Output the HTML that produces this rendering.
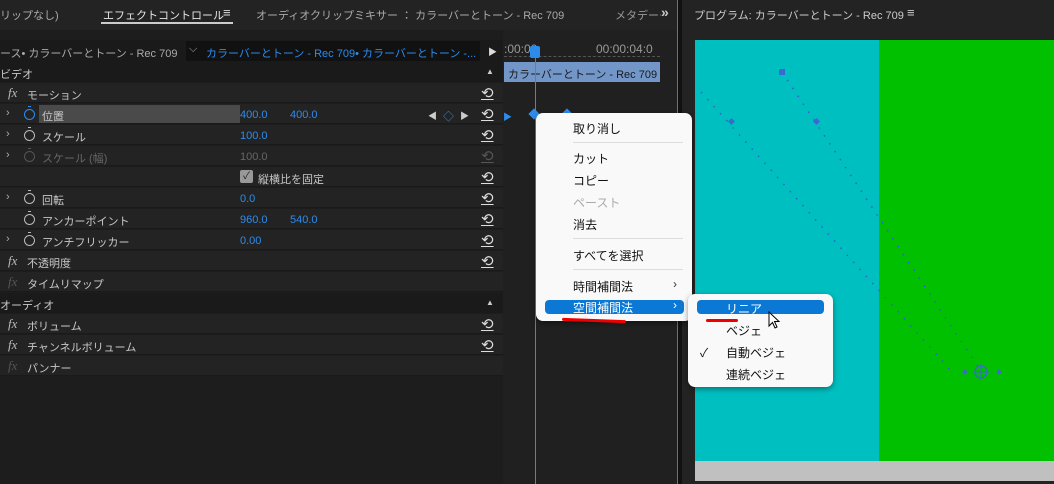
<!DOCTYPE html>
<html><head><meta charset="utf-8"><style>
*{margin:0;padding:0;box-sizing:border-box}
body{width:1054px;height:484px;background:#1d1d1d;position:relative;overflow:hidden;font-family:"Liberation Sans","Noto Sans CJK JP",sans-serif;font-size:11px;color:#bdbdbd}
.a{position:absolute;white-space:nowrap}
.row{position:absolute;left:0;width:503px;height:20px;background:#232323;border-bottom:1px solid #1a1a1a}
.lbl{position:absolute;top:4px;font-size:11px;color:#c8c8c8}
.fx{position:absolute;left:8px;top:2px;font-style:italic;font-family:"Liberation Serif",serif;font-size:13px;color:#bbb}
.val{position:absolute;top:5px;color:#2d8ceb;font-size:11px}
.rs{position:absolute;left:481px;top:1px;font-size:15px;color:#ddd;text-decoration:underline;text-decoration-thickness:1px}
.sw{position:absolute;left:24px;top:5px;width:11px;height:11px;border:1.5px solid #bbb;border-radius:50%}
.sw:before{content:"";position:absolute;left:3px;top:-4px;width:3px;height:2px;background:inherit;border-top:1.5px solid;border-color:inherit}
.car{position:absolute;left:6px;top:3px;color:#aaa;font-size:11px}
.mi{position:absolute;left:573px;font-size:12px;color:#111}
.sep{position:absolute;left:573px;width:110px;height:1px;background:#ddd}
</style></head><body>
<div class="a" style="left:0;top:0;width:677px;height:30px;background:#232323"></div>
<div class="a" style="left:0;top:7px;font-size:11px;color:#aaa">リップなし)</div>
<div class="a" style="left:103px;top:7px;font-size:11px;color:#e6e6e6">エフェクトコントロール</div>
<div class="a" style="left:223px;top:5px;font-size:13px;color:#ddd">≡</div>
<div class="a" style="left:101px;top:22px;width:132px;height:2px;background:#ccc"></div>
<div class="a" style="left:256px;top:7px;font-size:11px;color:#aaa">オーディオクリップミキサー ： カラーバーとトーン - Rec 709</div>
<div class="a" style="left:615px;top:7px;font-size:11px;color:#999">メタデータ</div>
<div class="a" style="left:661px;top:4px;width:16px;height:20px;background:#232323;font-size:14px;color:#ccc;font-weight:bold">»</div>
<div class="a" style="left:677px;top:0;width:1px;height:484px;background:#2d7fd6"></div>
<div class="a" style="left:678px;top:0;width:4px;height:484px;background:#111"></div>
<div class="a" style="left:682px;top:0;width:372px;height:484px;background:#232323"></div>
<div class="a" style="left:694px;top:7px;font-size:11px;color:#ccc">プログラム: カラーバーとトーン - Rec 709</div>
<div class="a" style="left:907px;top:5px;font-size:13px;color:#ccc">≡</div>
<div class="a" style="left:695px;top:40px;width:184px;height:421px;background:#00bfc0"></div>
<div class="a" style="left:879px;top:40px;width:175px;height:421px;background:#00c000"></div>
<div class="a" style="left:695px;top:461px;width:359px;height:20px;background:#c0c0c0"></div>
<svg class="a" style="left:0;top:0" width="1054" height="484">
<g fill="none" stroke="#3a5ec8" stroke-width="1.5">
<g stroke-dasharray="1.5 8"><line x1="701" y1="92" x2="952" y2="372"/><line x1="782" y1="72" x2="981" y2="371"/></g>
</g>
<g fill="#3a6ad0">
<rect x="779" y="69" width="6" height="6"/>
<rect x="729" y="119" width="5" height="5" transform="rotate(45 731.5 121.5)"/>
<rect x="814" y="119" width="5" height="5" transform="rotate(45 816.5 121.5)"/>
<rect x="963" y="370" width="4" height="4" transform="rotate(45 965 372)"/>
<rect x="997" y="370" width="4" height="4" transform="rotate(45 999 372)"/>
</g>
<circle cx="981" cy="372" r="6" fill="none" stroke="#3a6ad0" stroke-width="1.3"/>
<line x1="981" y1="364" x2="981" y2="380" stroke="#3a6ad0"/><line x1="973" y1="372" x2="989" y2="372" stroke="#3a6ad0"/>
</svg>
<div class="a" style="left:0;top:40px;width:503px;height:22px;background:#1a1a1a"></div>
<div class="a" style="left:0;top:45px;color:#aaa">ース• カラーバーとトーン - Rec 709</div>
<div class="a" style="left:186px;top:41px;width:294px;height:20px;background:#111"></div>
<div class="a" style="left:189px;top:43px;color:#aaa">⌵</div>
<div class="a" style="left:206px;top:45px;color:#2d8ceb">カラーバーとトーン - Rec 709• カラーバーとトーン -...</div>
<div class="a" style="left:488px;top:45px;color:#ddd;font-size:9px">▶</div>
<div class="row" style="top:62px;background:#1a1a1a"><span class="lbl" style="left:0">ビデオ</span><span class="a" style="left:486px;top:5px;font-size:8px;color:#ccc">▲</span></div>
<div class="row" style="top:83px"><span class="fx">fx</span><span class="lbl" style="left:27px">モーション</span><span class="rs">⟲</span></div>
<div class="row" style="top:104px"><span class="car">›</span><span class="sw" style="border-color:#2d8ceb"></span><div class="a" style="left:39px;top:1px;width:201px;height:18px;background:#4a4a4a"></div><span class="lbl" style="left:42px">位置</span><span class="val" style="left:240px">400.0</span><span class="val" style="left:290px">400.0</span><span class="a" style="left:428px;top:5px;font-size:9px;color:#ccc">◀</span><span class="a" style="left:443px;top:4px;color:#2d8ceb">◇</span><span class="a" style="left:460px;top:5px;font-size:9px;color:#ccc">▶</span><span class="rs">⟲</span></div>
<div class="row" style="top:125px"><span class="car">›</span><span class="sw"></span><span class="lbl" style="left:42px">スケール</span><span class="val" style="left:240px">100.0</span><span class="rs">⟲</span></div>
<div class="row" style="top:146px"><span class="car">›</span><span class="sw" style="border-color:#555"></span><span class="lbl" style="left:42px;color:#666">スケール (幅)</span><span class="val" style="left:240px;color:#666">100.0</span><span class="rs" style="color:#555">⟲</span></div>
<div class="row" style="top:167px"><div class="a" style="left:240px;top:3px;width:13px;height:13px;background:#999;border-radius:2px;color:#222;font-size:10px;text-align:center;line-height:13px">✓</div><span class="lbl" style="left:258px">縦横比を固定</span><span class="rs">⟲</span></div>
<div class="row" style="top:188px"><span class="car">›</span><span class="sw"></span><span class="lbl" style="left:42px">回転</span><span class="val" style="left:240px">0.0</span><span class="rs">⟲</span></div>
<div class="row" style="top:209px"><span class="sw"></span><span class="lbl" style="left:42px">アンカーポイント</span><span class="val" style="left:240px">960.0</span><span class="val" style="left:290px">540.0</span><span class="rs">⟲</span></div>
<div class="row" style="top:230px"><span class="car">›</span><span class="sw"></span><span class="lbl" style="left:42px">アンチフリッカー</span><span class="val" style="left:240px">0.00</span><span class="rs">⟲</span></div>
<div class="row" style="top:251px"><span class="fx">fx</span><span class="lbl" style="left:27px">不透明度</span><span class="rs">⟲</span></div>
<div class="row" style="top:272px"><span class="fx" style="color:#555">fx</span><span class="lbl" style="left:27px">タイムリマップ</span></div>
<div class="row" style="top:293px;background:#1a1a1a"><span class="lbl" style="left:0">オーディオ</span><span class="a" style="left:486px;top:5px;font-size:8px;color:#ccc">▲</span></div>
<div class="row" style="top:314px"><span class="fx">fx</span><span class="lbl" style="left:27px">ボリューム</span><span class="rs">⟲</span></div>
<div class="row" style="top:335px"><span class="fx">fx</span><span class="lbl" style="left:27px">チャンネルボリューム</span><span class="rs">⟲</span></div>
<div class="row" style="top:356px"><span class="fx" style="color:#555">fx</span><span class="lbl" style="left:27px">パンナー</span></div>
<div class="a" style="left:503px;top:30px;width:174px;height:454px;background:#202020"></div>
<div class="a" style="left:504px;top:42px;color:#999;font-size:12px">:00:00</div>
<div class="a" style="left:596px;top:42px;color:#999;font-size:12px">00:00:04:0</div>
<div class="a" style="left:504px;top:56px;width:156px;height:4px;border-top:1px dashed #555"></div>
<div class="a" style="left:504px;top:62px;width:156px;height:20px;background:#7396c8;color:#1a1a1a;padding:4px 4px;font-size:11px">カラーバーとトーン - Rec 709</div>
<div class="a" style="left:530px;top:46px;width:10px;height:12px;background:#2d8ceb;border-radius:2px"></div>
<div class="a" style="left:535px;top:56px;width:1px;height:428px;background:#2d8ceb"></div>
<div class="a" style="left:503px;top:110px;font-size:9px;color:#2d8ceb">▶</div>
<div class="a" style="left:530px;top:110px;width:8px;height:8px;background:#2d8ceb;transform:rotate(45deg)"></div>
<div class="a" style="left:563px;top:110px;width:8px;height:8px;background:#2d8ceb;transform:rotate(45deg)"></div>
<div class="a" style="left:536px;top:113px;width:156px;height:208px;background:#f9f9f9;border-radius:7px;box-shadow:0 2px 6px rgba(0,0,0,.4)"></div>
<div class="mi" style="top:120px">取り消し</div>
<div class="sep" style="top:142px"></div>
<div class="mi" style="top:150px">カット</div>
<div class="mi" style="top:172px">コピー</div>
<div class="mi" style="top:194px;color:#aaa">ペースト</div>
<div class="mi" style="top:216px">消去</div>
<div class="sep" style="top:238px"></div>
<div class="mi" style="top:247px">すべてを選択</div>
<div class="sep" style="top:269px"></div>
<div class="mi" style="top:278px">時間補間法</div><div class="a" style="left:673px;top:277px;color:#333;font-size:12px">›</div>
<div class="a" style="left:545px;top:300px;width:139px;height:14px;background:#0a78d4;border-radius:4px"></div>
<div class="mi" style="top:299px;color:#fff">空間補間法</div><div class="a" style="left:673px;top:298px;color:#fff;font-size:12px">›</div>
<div class="a" style="left:562px;top:319px;width:64px;height:3px;background:#e00;border-radius:2px;transform:rotate(2deg)"></div>
<div class="a" style="left:688px;top:294px;width:145px;height:93px;background:#f9f9f9;border-radius:7px;box-shadow:0 2px 6px rgba(0,0,0,.4)"></div>
<div class="a" style="left:697px;top:300px;width:127px;height:14px;background:#0a78d4;border-radius:4px"></div>
<div class="a" style="left:726px;top:300px;font-size:12px;color:#fff">リニア</div>
<div class="a" style="left:706px;top:319px;width:32px;height:3px;background:#e00;border-radius:2px"></div>
<div class="a" style="left:726px;top:322px;font-size:12px;color:#111">ベジェ</div>
<div class="a" style="left:700px;top:344px;font-size:12px;color:#111">✓</div>
<div class="a" style="left:726px;top:344px;font-size:12px;color:#111">自動ベジェ</div>
<div class="a" style="left:726px;top:366px;font-size:12px;color:#111">連続ベジェ</div>
<svg class="a" style="left:768px;top:311px" width="14" height="20"><path d="M1 1 L1 15 L4.5 11.5 L7 17 L9 16 L6.5 10.5 L11 10.5 Z" fill="#fff" stroke="#000" stroke-width="1"/></svg>
</body></html>
